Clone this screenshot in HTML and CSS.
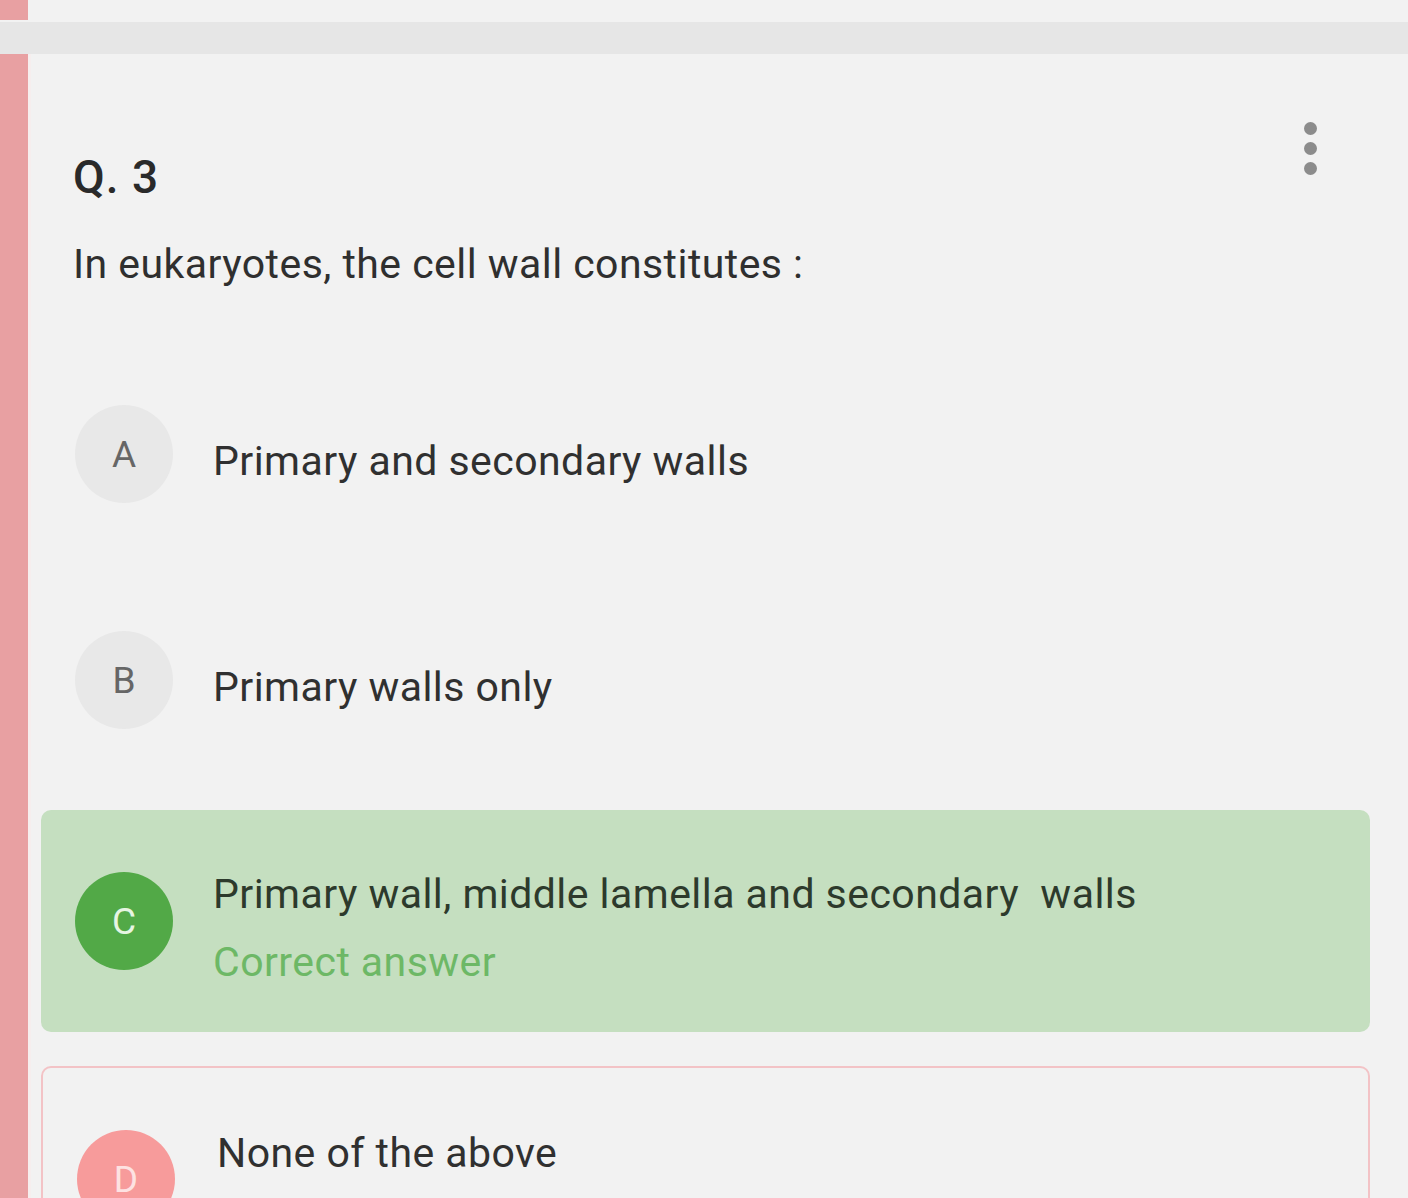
FILE: index.html
```html
<!DOCTYPE html>
<html lang="en">
<head>
<meta charset="utf-8">
<title>Q. 3</title>
<link rel="stylesheet" href="styles.css">
</head>
<body>
  <div class="top-strip"><div class="top-strip__accent"></div></div>
  <div class="divider-band"></div>
  <main class="question-card">
    <div class="question-card__accent"></div>
    <div class="question-card__body">
      <div class="question-head">
        <h2 class="question-no">Q. 3</h2>
        <div class="more-menu" aria-label="More options">
          <span class="more-menu__dot"></span>
          <span class="more-menu__dot"></span>
          <span class="more-menu__dot"></span>
        </div>
      </div>
      <p class="question-text">In eukaryotes, the cell wall constitutes :</p>
      <div class="options">
        <div class="option">
          <div class="option__badge">A</div>
          <div class="option__text"><div class="option__label">Primary and secondary walls</div></div>
        </div>
        <div class="option">
          <div class="option__badge">B</div>
          <div class="option__text"><div class="option__label">Primary walls only</div></div>
        </div>
        <div class="option option--correct">
          <div class="option__badge">C</div>
          <div class="option__text">
            <div class="option__label">Primary wall, middle lamella and secondary&nbsp; walls</div>
            <div class="option__note">Correct answer</div>
          </div>
        </div>
        <div class="option option--wrong">
          <div class="option__badge">D</div>
          <div class="option__text">
            <div class="option__label">None of the above</div>
          </div>
        </div>
      </div>
    </div>
  </main>
</body>
</html>
```
FILE: styles.css
```css
html {
  overflow: hidden;
}
body {
  margin: 0;
  background: #f2f2f2;
  font-family: Roboto, "Liberation Sans", Arial, sans-serif;
  color: #333333;
}
.top-strip {
  height: 22px;
}
.top-strip__accent {
  width: 28px;
  height: 20px;
  background: #e8a0a2;
}
.divider-band {
  height: 32px;
  background: #e6e6e6;
}
.question-card {
  display: flex;
  min-height: 1300px;
}
.question-card__accent {
  width: 28px;
  flex: none;
  background: #e8a0a2;
  border-right: 3px solid #f6eeee;
}
.question-card__body {
  flex: 1;
  padding: 68px 38px 40px 10px;
}
.question-head {
  display: flex;
  justify-content: space-between;
  align-items: flex-start;
  padding-left: 32px;
}
.question-no {
  margin: 29px 0 0;
  font-size: 46px;
  line-height: 52px;
  letter-spacing: 1px;
  font-weight: 500;
  color: #2a2a2a;
}
.more-menu {
  display: flex;
  flex-direction: column;
  gap: 7px;
  margin-right: 53px;
}
.more-menu__dot {
  width: 13px;
  height: 13px;
  border-radius: 50%;
  background: #8c8c8c;
}
.question-text {
  margin: 37px 0 0 32px;
  font-size: 41px;
  line-height: 48px;
  letter-spacing: 0.45px;
  color: #2f2f2f;
}
.options {
  margin-top: 53px;
  display: flex;
  flex-direction: column;
}
.option {
  display: flex;
  align-items: center;
  height: 226px;
  padding: 0 33px;
  box-sizing: border-box;
  border-radius: 10px;
}
.option__badge {
  width: 98px;
  height: 98px;
  flex: none;
  border-radius: 50%;
  background: #e8e8e8;
  color: #666666;
  font-size: 37px;
  display: flex;
  align-items: center;
  justify-content: center;
  margin-left: 1px;
}
.option__text {
  margin-left: 40px;
  margin-top: 13px;
}
.option__label {
  font-size: 41px;
  line-height: 48px;
  letter-spacing: 0.45px;
  color: #303030;
}
.option__note {
  margin-top: 21px;
  font-size: 41px;
  line-height: 46px;
  letter-spacing: 0.45px;
}
.option--correct {
  margin-top: 17px;
  height: 222px;
  background: #c5dfc0;
}
.option--correct .option__badge {
  background: #52a947;
  color: #e6f5e2;
}
.option--correct .option__label {
  color: #2d3a2c;
}
.option--correct .option__note {
  color: #6db866;
}
.option--wrong {
  margin-top: 34px;
  height: 226px;
  border: 2px solid #f3c3c6;
  padding-left: 33px;
}
.option--wrong .option__badge {
  background: #f79b9b;
  color: #fde2e2;
}
.option--wrong .option__text {
  align-self: flex-start;
  margin-top: 61px;
  margin-left: 42px;
}
```
